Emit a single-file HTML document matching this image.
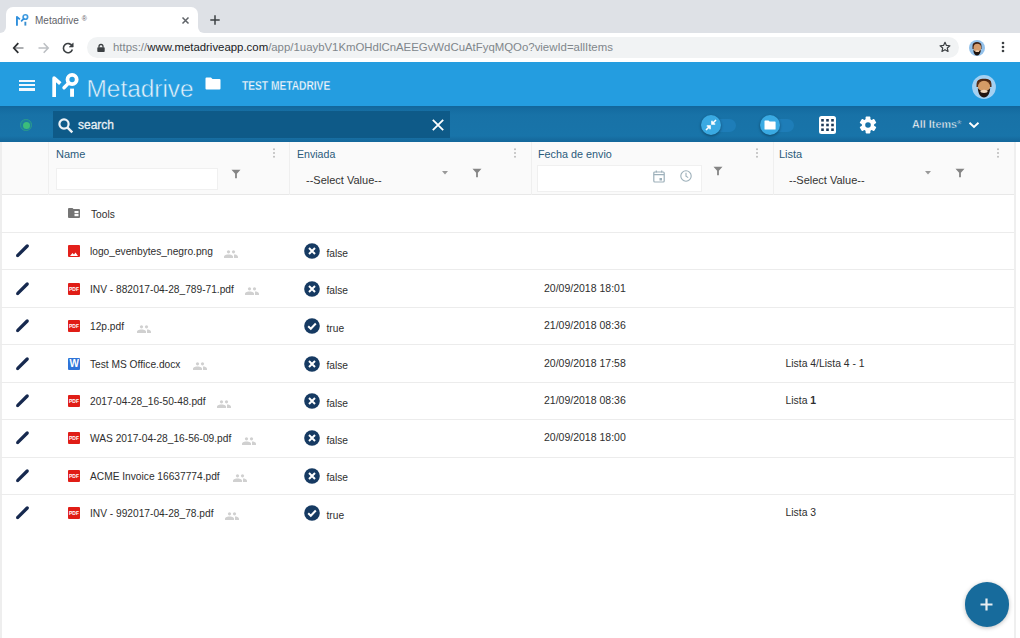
<!DOCTYPE html>
<html><head><meta charset="utf-8">
<style>
*{margin:0;padding:0;box-sizing:border-box}
html,body{width:1020px;height:638px;overflow:hidden;background:#fff;font-family:"Liberation Sans",sans-serif}
.a{position:absolute}
.t{position:absolute;white-space:nowrap;line-height:1}
svg{position:absolute;overflow:visible}
</style></head><body>
<!-- chrome tab strip -->
<div class="a" style="left:0;top:0;width:1020px;height:33px;background:#dee1e6"></div>
<div class="a" style="left:0;top:27px;width:204px;height:6px;background:#fff"></div><div class="a" style="left:0;top:27px;width:6px;height:6px;background:#dee1e6;border-bottom-right-radius:6px"></div><div class="a" style="left:198px;top:27px;width:6px;height:6px;background:#dee1e6;border-bottom-left-radius:6px"></div><div class="a" style="left:6px;top:6.5px;width:192px;height:27px;background:#fff;border-radius:7px 7px 0 0"></div>
<!-- favicon -->
<svg style="left:14.9px;top:13.1px" width="15.04" height="14.1" viewBox="0 0 32 30">
 <path d="M4.15 27V8.2L10.3 13.6" stroke="#2f8fdc" stroke-width="4" fill="none" stroke-linejoin="round"/>
 <circle cx="22.1" cy="8.5" r="4.8" stroke="#3d9ae0" stroke-width="3.6" fill="none"/>
 <path d="M18.3 12.4L14 16.8" stroke="#2f8fdc" stroke-width="3.6" fill="none" stroke-linecap="round"/>
 <path d="M22.05 18.6V26.8" stroke="#3a8fd0" stroke-width="4" fill="none"/>
</svg>
<div class="t" style="left:35px;top:15px;font-size:10px;color:#5f6368">Metadrive <span style="font-size:7px;vertical-align:3px">®</span></div>
<svg style="left:181.5px;top:16.5px" width="7" height="7" viewBox="0 0 7 7"><path d="M0.5 0.5L6.5 6.5M6.5 0.5L0.5 6.5" stroke="#5f6368" stroke-width="1.5"/></svg>
<svg style="left:210px;top:15px" width="10" height="10" viewBox="0 0 10 10"><path d="M5 0.3V9.7M0.3 5H9.7" stroke="#3c4043" stroke-width="1.5"/></svg>
<!-- toolbar -->
<div class="a" style="left:0;top:33px;width:1020px;height:29px;background:#fff"></div>
<svg style="left:11.5px;top:42px" width="13" height="12" viewBox="0 0 13 12"><path d="M11.5 6H2.5" stroke="#8a8d91" stroke-width="1.4" fill="none"/><path d="M6.3 1.2L1.8 6L6.3 10.8" stroke="#2d3033" stroke-width="1.8" fill="none"/></svg>
<svg style="left:36.5px;top:42px" width="13" height="12" viewBox="0 0 13 12"><path d="M1.5 6H10.5M6.7 1.2L11.2 6L6.7 10.8" stroke="#bdc0c4" stroke-width="1.6" fill="none"/></svg>
<svg style="left:62.3px;top:42.2px" width="12" height="12" viewBox="0 0 12 12"><path d="M10.2 4.2A4.6 4.6 0 1 0 10.4 7.5" stroke="#3c4043" stroke-width="1.6" fill="none"/><path d="M11.2 0.8V5H7" fill="#3c4043" stroke="#3c4043" stroke-width="0.6"/></svg>
<div class="a" style="left:87px;top:36.5px;width:872px;height:21.5px;background:#f1f3f4;border-radius:10.75px"></div>
<svg style="left:96.5px;top:43.5px" width="8" height="8" viewBox="0 0 8 8"><rect x="0.3" y="3.3" width="7.4" height="4.7" rx="0.8" fill="#3c4043"/><path d="M2 3.6V2.5A2 2 0 0 1 6 2.5V3.6" stroke="#3c4043" stroke-width="1.3" fill="none"/></svg>
<div class="t" style="left:113px;top:42px;font-size:11.4px;color:#80868b">https://<span style="color:#202124">www.metadriveapp.com</span>/app/1uaybV1KmOHdlCnAEEGvWdCuAtFyqMQOo?viewId=allItems</div>
<svg style="left:939px;top:41px" width="12" height="12" viewBox="0 0 24 24"><path d="M12 2.5l2.9 6.3 6.9.7-5.2 4.6 1.5 6.8L12 17.4l-6.1 3.5 1.5-6.8-5.2-4.6 6.9-.7z" stroke="#3c4043" stroke-width="2.4" fill="none" stroke-linejoin="round"/></svg>
<svg style="left:969px;top:40px" width="16" height="16" viewBox="0 0 16 16">
 <circle cx="8" cy="8" r="8" fill="#93c1ea"/>
 <path d="M3.5 6C3.5 3 5.5 2 8 2S12.5 3 12.5 6V9H3.5Z" fill="#3b2016"/>
 <ellipse cx="8.3" cy="8" rx="3.8" ry="4.2" fill="#d69c6c"/>
 <path d="M4.2 9.5C4.5 13.5 6 15.5 8 15.5S11.5 13.5 12 9.5C11 11 10 11.5 8 11.5S5 11 4.2 9.5Z" fill="#1e120c"/>
 <ellipse cx="8.3" cy="11.2" rx="2" ry="0.9" fill="#e8c8a8"/>
</svg>
<svg style="left:1001px;top:41px" width="4" height="12" viewBox="0 0 4 12"><circle cx="2" cy="2" r="1.3" fill="#3c4043"/><circle cx="2" cy="6" r="1.3" fill="#3c4043"/><circle cx="2" cy="10" r="1.3" fill="#3c4043"/></svg>

<!-- blue app header -->
<div class="a" style="left:0;top:62px;width:1020px;height:44px;background:#249de0"></div>
<div class="a" style="left:19.2px;top:80.1px;width:15.5px;height:2.3px;background:#f2f8fd"></div>
<div class="a" style="left:19.2px;top:84px;width:15.5px;height:2.1px;background:#f2f8fd"></div>
<div class="a" style="left:19.2px;top:88.2px;width:15.5px;height:2.6px;background:#f2f8fd"></div>
<svg style="left:50px;top:70px" width="32" height="30" viewBox="0 0 32 30">
 <path d="M4.15 27V8.2L10.3 13.6" stroke="#fff" stroke-width="3.7" fill="none" stroke-linejoin="round"/>
 <circle cx="22.1" cy="9.5" r="4.6" stroke="#fff" stroke-width="3.8" fill="none"/>
 <path d="M18.3 13.4L14 17.8" stroke="#fff" stroke-width="3.4" fill="none" stroke-linecap="round"/>
 <path d="M22.05 18.6V26.8" stroke="#fff" stroke-width="3.9" fill="none"/>
</svg>
<div class="t" style="left:86.5px;top:77px;font-size:24.4px;color:#e2f2fc;-webkit-text-stroke:0.5px #249de0">Metadrive</div>
<svg style="left:205px;top:77px" width="16" height="13" viewBox="0 0 16 13"><path d="M0.5 1.5A1 1 0 0 1 1.5 0.5H6L7.5 2H14.5A1 1 0 0 1 15.5 3V11.5A1 1 0 0 1 14.5 12.5H1.5A1 1 0 0 1 0.5 11.5Z" fill="#fff"/></svg>
<div class="t" style="left:242px;top:80px;font-size:12px;font-weight:bold;color:#f4f9fd;transform:scaleX(0.85);transform-origin:0 0;-webkit-text-stroke:0.3px #249de0">TEST METADRIVE</div>
<svg style="left:972px;top:75px" width="24" height="24" viewBox="0 0 24 24">
 <circle cx="12" cy="12" r="11.9" fill="#a3d1f2"/>
 <path d="M4.5 10C4.5 5 7.5 3.8 12 3.8S19.5 5 19.5 10V12H4.5Z" fill="#5a3018"/>
 <ellipse cx="12" cy="12" rx="6" ry="6.2" fill="#d59b66"/>
 <path d="M5.5 7.5C7 5.5 9 5.3 12 5.5S17.5 6 18.5 8L18.5 6C17 4.5 15 4 12 4S6 4.8 5.5 7.5Z" fill="#4a2512"/>
 <path d="M5.8 13C6.2 19 8.5 22.5 12 22.5S17.8 19 18.2 13C17 15 15 16 12 16S7 15 5.8 13Z" fill="#221510"/>
 <ellipse cx="12" cy="16.3" rx="3.6" ry="1.6" fill="#f2d8bc"/>
</svg>
<!-- dark toolbar -->
<div class="a" style="left:0;top:106px;width:1020px;height:36px;background:linear-gradient(to bottom,#12669b 0px,#156ca1 3px,#1872a7 9px,#1874a9 30px,#166ca0 33px,#13679b 36px)"></div>
<div class="a" style="left:20.2px;top:119.2px;width:11.6px;height:11.6px;border-radius:50%;border:1.6px solid #2a9c8c;background:#1d7f9e"></div>
<div class="a" style="left:22.5px;top:121.5px;width:7px;height:7px;border-radius:50%;background:#3bbd7b"></div>
<div class="a" style="left:53px;top:111px;width:397px;height:27px;background:#0e5a88"></div>
<svg style="left:57px;top:117px" width="17" height="17" viewBox="0 0 17 17"><circle cx="7" cy="7" r="4.6" stroke="#eef3f7" stroke-width="2.2" fill="none"/><path d="M10.3 10.3L15.3 15.3" stroke="#eef3f7" stroke-width="2.4"/></svg>
<div class="t" style="left:78px;top:119px;font-size:12px;color:#e8f0f5;-webkit-text-stroke:0.3px #e8f0f5">search</div>
<svg style="left:432px;top:119px" width="12" height="12" viewBox="0 0 12 12"><path d="M0.8 0.8L11.2 11.2M11.2 0.8L0.8 11.2" stroke="#fff" stroke-width="1.8"/></svg>

<!-- toggles -->
<div class="a" style="left:706px;top:118.5px;width:30px;height:13px;border-radius:6.5px;background:#1e7db8"></div>
<div class="a" style="left:701px;top:115px;width:20px;height:20px;border-radius:50%;background:#3aaae3;box-shadow:0 1px 3px rgba(0,0,0,0.4)"></div>
<svg style="left:705px;top:119px" width="12" height="12" viewBox="0 0 12 12"><path d="M11 1L7.2 4.8M7 1.8V5H10.2M1 11L4.8 7.2M1.8 7H5V10.2" stroke="#fff" stroke-width="1.6" fill="none"/></svg>
<div class="a" style="left:765px;top:118.5px;width:29px;height:13px;border-radius:6.5px;background:#1e7db8"></div>
<div class="a" style="left:760px;top:115px;width:20px;height:20px;border-radius:50%;background:#3aaae3;box-shadow:0 1px 3px rgba(0,0,0,0.4)"></div>
<svg style="left:764px;top:120px" width="12" height="10" viewBox="0 0 12 10"><path d="M0.5 1A0.6 0.6 0 0 1 1.1 0.4H4.5L5.6 1.5H11A0.6 0.6 0 0 1 11.6 2.1V9A0.6 0.6 0 0 1 11 9.6H1.1A0.6 0.6 0 0 1 0.5 9Z" fill="#fff"/></svg>
<!-- grid icon -->
<svg style="left:819px;top:116px" width="17" height="18" viewBox="0 0 17 18">
 <rect x="0" y="0" width="17" height="18" rx="2.5" fill="#fff"/>
 <g fill="#1d3a58">
 <rect x="2.2" y="3" width="2.6" height="2.6"/><rect x="7.2" y="3" width="2.6" height="2.6"/><rect x="12.2" y="3" width="2.6" height="2.6"/>
 <rect x="2.2" y="7.7" width="2.6" height="2.6"/><rect x="7.2" y="7.7" width="2.6" height="2.6"/><rect x="12.2" y="7.7" width="2.6" height="2.6"/>
 <rect x="2.2" y="12.4" width="2.6" height="2.6"/><rect x="7.2" y="12.4" width="2.6" height="2.6"/><rect x="12.2" y="12.4" width="2.6" height="2.6"/>
 </g>
</svg>
<!-- gear -->
<svg style="left:858.3px;top:114.9px" width="20" height="20" viewBox="-10 -10 20 20"><g fill="#fff"><rect x="-2.4" y="-8.4" width="4.8" height="5" rx="0.8" transform="rotate(0)"/><rect x="-2.4" y="-8.4" width="4.8" height="5" rx="0.8" transform="rotate(60)"/><rect x="-2.4" y="-8.4" width="4.8" height="5" rx="0.8" transform="rotate(120)"/><rect x="-2.4" y="-8.4" width="4.8" height="5" rx="0.8" transform="rotate(180)"/><rect x="-2.4" y="-8.4" width="4.8" height="5" rx="0.8" transform="rotate(240)"/><rect x="-2.4" y="-8.4" width="4.8" height="5" rx="0.8" transform="rotate(300)"/></g><circle r="6.2" fill="#fff"/><circle r="2.8" fill="#1873a8"/></svg>
<div class="t" style="left:912px;top:119px;font-size:10.8px;font-weight:bold;color:#fff;-webkit-text-stroke:0.5px #1873a7">All Items*</div>
<svg style="left:968px;top:121px" width="12" height="8" viewBox="0 0 12 8"><path d="M1.5 1.8L6 6L10.5 1.8" stroke="#fff" stroke-width="1.9" fill="none"/></svg>

<!-- table header -->
<div class="a" style="left:0;top:142px;width:1014px;height:53px;background:#fafafa;border-bottom:1px solid #e8e8e8"></div>
<div class="a" style="left:48px;top:142px;width:1px;height:53px;background:#efefef"></div>
<div class="a" style="left:289px;top:142px;width:1px;height:53px;background:#efefef"></div>
<div class="a" style="left:531px;top:142px;width:1px;height:53px;background:#efefef"></div>
<div class="a" style="left:773px;top:142px;width:1px;height:53px;background:#efefef"></div>
<div class="a" style="left:1013.5px;top:142px;width:2px;height:496px;background:#efefef"></div>

<div class="a" style="left:0;top:142px;width:1.5px;height:496px;background:#eeeeee"></div>
<div class="t" style="left:56px;top:148.5px;font-size:11px;color:#2a5b7a">Name</div>
<div class="t" style="left:297px;top:148.5px;font-size:10.6px;color:#2a5b7a">Enviada</div>
<div class="t" style="left:538px;top:148.5px;font-size:10.8px;color:#2a5b7a">Fecha de envio</div>
<div class="t" style="left:779px;top:148.5px;font-size:11px;color:#2a5b7a">Lista</div>

<div class="a" style="left:56px;top:168px;width:162px;height:22px;background:#fff;border:1px solid #f0f0f0"></div>
<div class="t" style="left:306px;top:175.4px;font-size:11px;color:#333">--Select Value--</div>
<div class="a" style="left:537px;top:165px;width:165px;height:27px;background:#fff;border:1px solid #f0f0f0"></div>
<div class="t" style="left:789px;top:175.4px;font-size:11px;color:#333">--Select Value--</div>

<!-- header icons (dots, filters, arrows) -->
<svg style="left:272px;top:148px" width="4" height="10" viewBox="0 0 4 10"><circle cx="2" cy="1.3" r="1" fill="#bbb"/><circle cx="2" cy="5" r="1" fill="#bbb"/><circle cx="2" cy="8.7" r="1" fill="#bbb"/></svg>
<svg style="left:513px;top:148px" width="4" height="10" viewBox="0 0 4 10"><circle cx="2" cy="1.3" r="1" fill="#bbb"/><circle cx="2" cy="5" r="1" fill="#bbb"/><circle cx="2" cy="8.7" r="1" fill="#bbb"/></svg>
<svg style="left:755px;top:148px" width="4" height="10" viewBox="0 0 4 10"><circle cx="2" cy="1.3" r="1" fill="#bbb"/><circle cx="2" cy="5" r="1" fill="#bbb"/><circle cx="2" cy="8.7" r="1" fill="#bbb"/></svg>
<svg style="left:996px;top:148px" width="4" height="10" viewBox="0 0 4 10"><circle cx="2" cy="1.3" r="1" fill="#bbb"/><circle cx="2" cy="5" r="1" fill="#bbb"/><circle cx="2" cy="8.7" r="1" fill="#bbb"/></svg>

<svg style="left:231px;top:169px" width="10" height="10" viewBox="0 0 10 10"><path d="M0.5 0.8H9.5L5.9 4.8V9.3H4.1V4.8Z" fill="#858585"/></svg>
<svg style="left:472px;top:168px" width="10" height="10" viewBox="0 0 10 10"><path d="M0.5 0.8H9.5L5.9 4.8V9.3H4.1V4.8Z" fill="#858585"/></svg>
<svg style="left:713px;top:166px" width="10" height="10" viewBox="0 0 10 10"><path d="M0.5 0.8H9.5L5.9 4.8V9.3H4.1V4.8Z" fill="#858585"/></svg>
<svg style="left:955px;top:168px" width="10" height="10" viewBox="0 0 10 10"><path d="M0.5 0.8H9.5L5.9 4.8V9.3H4.1V4.8Z" fill="#858585"/></svg>

<svg style="left:442px;top:171px" width="6" height="4" viewBox="0 0 6 4"><path d="M0 0H6L3 3.5Z" fill="#999"/></svg>
<svg style="left:925px;top:171px" width="6" height="4" viewBox="0 0 6 4"><path d="M0 0H6L3 3.5Z" fill="#999"/></svg>

<svg style="left:653px;top:170px" width="12" height="13" viewBox="0 0 12 13"><rect x="0.8" y="2" width="10.4" height="10" rx="1" stroke="#9db0ba" stroke-width="1.2" fill="none"/><path d="M0.8 4.6H11.2M3.3 0.5V2.5M8.7 0.5V2.5" stroke="#9db0ba" stroke-width="1.2"/><rect x="6.5" y="8" width="2.5" height="2.5" fill="#9db0ba"/></svg>
<svg style="left:680px;top:170px" width="12" height="12" viewBox="0 0 12 12"><circle cx="6" cy="6" r="5.2" stroke="#9db0ba" stroke-width="1.1" fill="none"/><path d="M6 2.8V6.2L8.2 7.6" stroke="#9db0ba" stroke-width="1.1" fill="none"/></svg>

<!-- rows -->
<svg style="left:68px;top:208.23px" width="12" height="10" viewBox="0 0 12 10"><path d="M0 1A1 1 0 0 1 1 0H4.5L5.5 1H11A1 1 0 0 1 12 2V9A1 1 0 0 1 11 10H1A1 1 0 0 1 0 9Z" fill="#757575"/><rect x="6.5" y="3" width="4" height="2.2" fill="#fff"/><rect x="6.5" y="6" width="4" height="2.2" fill="#fff"/></svg>
<div class="t" style="left:91px;top:210.03px;font-size:10.2px;color:#2e2e2e">Tools</div>
<div class="a" style="left:0;top:231.96px;width:1014px;height:1px;background:#ececec"></div>
<svg style="left:14px;top:242.19px" width="17" height="17" viewBox="0 0 17 17"><path d="M3.8 13.4L13.2 4" stroke="#16294f" stroke-width="3.3" stroke-linecap="round"/><path d="M3.2 12.6L2.2 15L4.6 14Z" fill="#16294f"/></svg>
<div class="a" style="left:68px;top:245.19px;width:12px;height:12px;background:#e3201b;border-radius:1px"></div><svg style="left:70px;top:251.69px" width="8" height="4" viewBox="0 0 8 4"><path d="M0 4L2.5 1L4 2.5L5.5 0.5L8 4Z" fill="#fff"/></svg>
<div class="t" style="left:90px;top:247.19px;font-size:10.2px;color:#2e2e2e">logo_evenbytes_negro.png</div>
<svg style="left:224px;top:249.69px" width="14" height="8" viewBox="0 0 14 8"><circle cx="4.5" cy="1.8" r="1.6" fill="#d0d0d0"/><circle cx="9.5" cy="1.8" r="1.6" fill="#d0d0d0"/><path d="M0 8V6.5C0 5 3 4.4 4.5 4.4S9 5 9 6.5V8Z" fill="#d0d0d0"/><path d="M10 4.4C11.5 4.4 14 5 14 6.5V8H10Z" fill="#d0d0d0"/></svg>
<svg style="left:304px;top:243.19px" width="16" height="16" viewBox="0 0 16 16"><circle cx="8" cy="8" r="7.8" fill="#163a62"/><path d="M5 5L11 11M11 5L5 11" stroke="#fff" stroke-width="2"/></svg>
<div class="t" style="left:326.5px;top:248.69px;font-size:10.2px;color:#2e2e2e">false</div>
<div class="a" style="left:0;top:269.42px;width:1014px;height:1px;background:#ececec"></div>
<svg style="left:14px;top:279.65px" width="17" height="17" viewBox="0 0 17 17"><path d="M3.8 13.4L13.2 4" stroke="#16294f" stroke-width="3.3" stroke-linecap="round"/><path d="M3.2 12.6L2.2 15L4.6 14Z" fill="#16294f"/></svg>
<svg style="left:68px;top:282.65px" width="12" height="12" viewBox="0 0 12 12"><rect width="12" height="12" rx="1" fill="#e01d16"/><text x="6" y="8.2" text-anchor="middle" font-family="Liberation Sans" font-weight="bold" font-size="5" fill="#fff">PDF</text></svg>
<div class="t" style="left:90px;top:284.65px;font-size:10.2px;color:#2e2e2e">INV - 882017-04-28_789-71.pdf</div>
<svg style="left:245px;top:287.15px" width="14" height="8" viewBox="0 0 14 8"><circle cx="4.5" cy="1.8" r="1.6" fill="#d0d0d0"/><circle cx="9.5" cy="1.8" r="1.6" fill="#d0d0d0"/><path d="M0 8V6.5C0 5 3 4.4 4.5 4.4S9 5 9 6.5V8Z" fill="#d0d0d0"/><path d="M10 4.4C11.5 4.4 14 5 14 6.5V8H10Z" fill="#d0d0d0"/></svg>
<svg style="left:304px;top:280.65px" width="16" height="16" viewBox="0 0 16 16"><circle cx="8" cy="8" r="7.8" fill="#163a62"/><path d="M5 5L11 11M11 5L5 11" stroke="#fff" stroke-width="2"/></svg>
<div class="t" style="left:326.5px;top:286.15px;font-size:10.2px;color:#2e2e2e">false</div>
<div class="t" style="left:544px;top:282.65px;font-size:10.5px;color:#2e2e2e">20/09/2018 18:01</div>
<div class="a" style="left:0;top:306.88px;width:1014px;height:1px;background:#ececec"></div>
<svg style="left:14px;top:317.11px" width="17" height="17" viewBox="0 0 17 17"><path d="M3.8 13.4L13.2 4" stroke="#16294f" stroke-width="3.3" stroke-linecap="round"/><path d="M3.2 12.6L2.2 15L4.6 14Z" fill="#16294f"/></svg>
<svg style="left:68px;top:320.11px" width="12" height="12" viewBox="0 0 12 12"><rect width="12" height="12" rx="1" fill="#e01d16"/><text x="6" y="8.2" text-anchor="middle" font-family="Liberation Sans" font-weight="bold" font-size="5" fill="#fff">PDF</text></svg>
<div class="t" style="left:90px;top:322.11px;font-size:10.2px;color:#2e2e2e">12p.pdf</div>
<svg style="left:137px;top:324.61px" width="14" height="8" viewBox="0 0 14 8"><circle cx="4.5" cy="1.8" r="1.6" fill="#d0d0d0"/><circle cx="9.5" cy="1.8" r="1.6" fill="#d0d0d0"/><path d="M0 8V6.5C0 5 3 4.4 4.5 4.4S9 5 9 6.5V8Z" fill="#d0d0d0"/><path d="M10 4.4C11.5 4.4 14 5 14 6.5V8H10Z" fill="#d0d0d0"/></svg>
<svg style="left:304px;top:318.11px" width="16" height="16" viewBox="0 0 16 16"><circle cx="8" cy="8" r="7.8" fill="#163a62"/><path d="M4.2 8.3L6.8 10.8L11.8 5.5" stroke="#fff" stroke-width="2" fill="none"/></svg>
<div class="t" style="left:326.5px;top:323.61px;font-size:10.2px;color:#2e2e2e">true</div>
<div class="t" style="left:544px;top:320.11px;font-size:10.5px;color:#2e2e2e">21/09/2018 08:36</div>
<div class="a" style="left:0;top:344.34px;width:1014px;height:1px;background:#ececec"></div>
<svg style="left:14px;top:354.57px" width="17" height="17" viewBox="0 0 17 17"><path d="M3.8 13.4L13.2 4" stroke="#16294f" stroke-width="3.3" stroke-linecap="round"/><path d="M3.2 12.6L2.2 15L4.6 14Z" fill="#16294f"/></svg>
<div class="a" style="left:68px;top:357.57px;width:12px;height:12px;background:#2f74d8;border-radius:1px"></div><div class="t" style="left:69.5px;top:359.07px;font-size:10px;font-weight:bold;color:#fff">W</div>
<div class="t" style="left:90px;top:359.57px;font-size:10.2px;color:#2e2e2e">Test MS Office.docx</div>
<svg style="left:193px;top:362.07px" width="14" height="8" viewBox="0 0 14 8"><circle cx="4.5" cy="1.8" r="1.6" fill="#d0d0d0"/><circle cx="9.5" cy="1.8" r="1.6" fill="#d0d0d0"/><path d="M0 8V6.5C0 5 3 4.4 4.5 4.4S9 5 9 6.5V8Z" fill="#d0d0d0"/><path d="M10 4.4C11.5 4.4 14 5 14 6.5V8H10Z" fill="#d0d0d0"/></svg>
<svg style="left:304px;top:355.57px" width="16" height="16" viewBox="0 0 16 16"><circle cx="8" cy="8" r="7.8" fill="#163a62"/><path d="M5 5L11 11M11 5L5 11" stroke="#fff" stroke-width="2"/></svg>
<div class="t" style="left:326.5px;top:361.07px;font-size:10.2px;color:#2e2e2e">false</div>
<div class="t" style="left:544px;top:357.57px;font-size:10.5px;color:#2e2e2e">20/09/2018 17:58</div>
<div class="t" style="left:785.5px;top:358.57px;font-size:10.4px;color:#2e2e2e">Lista 4/Lista 4 - 1</div>
<div class="a" style="left:0;top:381.80px;width:1014px;height:1px;background:#ececec"></div>
<svg style="left:14px;top:392.03px" width="17" height="17" viewBox="0 0 17 17"><path d="M3.8 13.4L13.2 4" stroke="#16294f" stroke-width="3.3" stroke-linecap="round"/><path d="M3.2 12.6L2.2 15L4.6 14Z" fill="#16294f"/></svg>
<svg style="left:68px;top:395.03px" width="12" height="12" viewBox="0 0 12 12"><rect width="12" height="12" rx="1" fill="#e01d16"/><text x="6" y="8.2" text-anchor="middle" font-family="Liberation Sans" font-weight="bold" font-size="5" fill="#fff">PDF</text></svg>
<div class="t" style="left:90px;top:397.03px;font-size:10.2px;color:#2e2e2e">2017-04-28_16-50-48.pdf</div>
<svg style="left:217px;top:399.53px" width="14" height="8" viewBox="0 0 14 8"><circle cx="4.5" cy="1.8" r="1.6" fill="#d0d0d0"/><circle cx="9.5" cy="1.8" r="1.6" fill="#d0d0d0"/><path d="M0 8V6.5C0 5 3 4.4 4.5 4.4S9 5 9 6.5V8Z" fill="#d0d0d0"/><path d="M10 4.4C11.5 4.4 14 5 14 6.5V8H10Z" fill="#d0d0d0"/></svg>
<svg style="left:304px;top:393.03px" width="16" height="16" viewBox="0 0 16 16"><circle cx="8" cy="8" r="7.8" fill="#163a62"/><path d="M5 5L11 11M11 5L5 11" stroke="#fff" stroke-width="2"/></svg>
<div class="t" style="left:326.5px;top:398.53px;font-size:10.2px;color:#2e2e2e">false</div>
<div class="t" style="left:544px;top:395.03px;font-size:10.5px;color:#2e2e2e">21/09/2018 08:36</div>
<div class="t" style="left:785.5px;top:396.03px;font-size:10.4px;color:#2e2e2e">Lista <b>1</b></div>
<div class="a" style="left:0;top:419.26px;width:1014px;height:1px;background:#ececec"></div>
<svg style="left:14px;top:429.49px" width="17" height="17" viewBox="0 0 17 17"><path d="M3.8 13.4L13.2 4" stroke="#16294f" stroke-width="3.3" stroke-linecap="round"/><path d="M3.2 12.6L2.2 15L4.6 14Z" fill="#16294f"/></svg>
<svg style="left:68px;top:432.49px" width="12" height="12" viewBox="0 0 12 12"><rect width="12" height="12" rx="1" fill="#e01d16"/><text x="6" y="8.2" text-anchor="middle" font-family="Liberation Sans" font-weight="bold" font-size="5" fill="#fff">PDF</text></svg>
<div class="t" style="left:90px;top:434.49px;font-size:10.2px;color:#2e2e2e">WAS 2017-04-28_16-56-09.pdf</div>
<svg style="left:242px;top:436.99px" width="14" height="8" viewBox="0 0 14 8"><circle cx="4.5" cy="1.8" r="1.6" fill="#d0d0d0"/><circle cx="9.5" cy="1.8" r="1.6" fill="#d0d0d0"/><path d="M0 8V6.5C0 5 3 4.4 4.5 4.4S9 5 9 6.5V8Z" fill="#d0d0d0"/><path d="M10 4.4C11.5 4.4 14 5 14 6.5V8H10Z" fill="#d0d0d0"/></svg>
<svg style="left:304px;top:430.49px" width="16" height="16" viewBox="0 0 16 16"><circle cx="8" cy="8" r="7.8" fill="#163a62"/><path d="M5 5L11 11M11 5L5 11" stroke="#fff" stroke-width="2"/></svg>
<div class="t" style="left:326.5px;top:435.99px;font-size:10.2px;color:#2e2e2e">false</div>
<div class="t" style="left:544px;top:432.49px;font-size:10.5px;color:#2e2e2e">20/09/2018 18:00</div>
<div class="a" style="left:0;top:456.72px;width:1014px;height:1px;background:#ececec"></div>
<svg style="left:14px;top:466.95px" width="17" height="17" viewBox="0 0 17 17"><path d="M3.8 13.4L13.2 4" stroke="#16294f" stroke-width="3.3" stroke-linecap="round"/><path d="M3.2 12.6L2.2 15L4.6 14Z" fill="#16294f"/></svg>
<svg style="left:68px;top:469.95px" width="12" height="12" viewBox="0 0 12 12"><rect width="12" height="12" rx="1" fill="#e01d16"/><text x="6" y="8.2" text-anchor="middle" font-family="Liberation Sans" font-weight="bold" font-size="5" fill="#fff">PDF</text></svg>
<div class="t" style="left:90px;top:471.95px;font-size:10.2px;color:#2e2e2e">ACME Invoice 16637774.pdf</div>
<svg style="left:233px;top:474.45px" width="14" height="8" viewBox="0 0 14 8"><circle cx="4.5" cy="1.8" r="1.6" fill="#d0d0d0"/><circle cx="9.5" cy="1.8" r="1.6" fill="#d0d0d0"/><path d="M0 8V6.5C0 5 3 4.4 4.5 4.4S9 5 9 6.5V8Z" fill="#d0d0d0"/><path d="M10 4.4C11.5 4.4 14 5 14 6.5V8H10Z" fill="#d0d0d0"/></svg>
<svg style="left:304px;top:467.95px" width="16" height="16" viewBox="0 0 16 16"><circle cx="8" cy="8" r="7.8" fill="#163a62"/><path d="M5 5L11 11M11 5L5 11" stroke="#fff" stroke-width="2"/></svg>
<div class="t" style="left:326.5px;top:473.45px;font-size:10.2px;color:#2e2e2e">false</div>
<div class="a" style="left:0;top:494.18px;width:1014px;height:1px;background:#ececec"></div>
<svg style="left:14px;top:504.41px" width="17" height="17" viewBox="0 0 17 17"><path d="M3.8 13.4L13.2 4" stroke="#16294f" stroke-width="3.3" stroke-linecap="round"/><path d="M3.2 12.6L2.2 15L4.6 14Z" fill="#16294f"/></svg>
<svg style="left:68px;top:507.41px" width="12" height="12" viewBox="0 0 12 12"><rect width="12" height="12" rx="1" fill="#e01d16"/><text x="6" y="8.2" text-anchor="middle" font-family="Liberation Sans" font-weight="bold" font-size="5" fill="#fff">PDF</text></svg>
<div class="t" style="left:90px;top:509.41px;font-size:10.2px;color:#2e2e2e">INV - 992017-04-28_78.pdf</div>
<svg style="left:225px;top:511.91px" width="14" height="8" viewBox="0 0 14 8"><circle cx="4.5" cy="1.8" r="1.6" fill="#d0d0d0"/><circle cx="9.5" cy="1.8" r="1.6" fill="#d0d0d0"/><path d="M0 8V6.5C0 5 3 4.4 4.5 4.4S9 5 9 6.5V8Z" fill="#d0d0d0"/><path d="M10 4.4C11.5 4.4 14 5 14 6.5V8H10Z" fill="#d0d0d0"/></svg>
<svg style="left:304px;top:505.41px" width="16" height="16" viewBox="0 0 16 16"><circle cx="8" cy="8" r="7.8" fill="#163a62"/><path d="M4.2 8.3L6.8 10.8L11.8 5.5" stroke="#fff" stroke-width="2" fill="none"/></svg>
<div class="t" style="left:326.5px;top:510.91px;font-size:10.2px;color:#2e2e2e">true</div>
<div class="t" style="left:785.5px;top:508.41px;font-size:10.4px;color:#2e2e2e">Lista 3</div>
<div class="a" style="left:964.5px;top:582px;width:44.5px;height:44.5px;border-radius:50%;background:#176b9c;box-shadow:0 1px 4px rgba(0,0,0,0.25)"></div>
<svg style="left:980px;top:598px" width="13" height="13" viewBox="0 0 13 13"><path d="M6.5 0.5V12.5M0.5 6.5H12.5" stroke="#e8eef2" stroke-width="2.2"/></svg>
</body></html>
